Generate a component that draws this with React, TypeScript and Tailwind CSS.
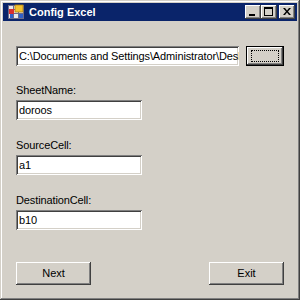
const raised =
  "shadow-[inset_-1px_-1px_#404040,inset_1px_1px_#ffffff,inset_-2px_-2px_#808080,inset_2px_2px_#d4d0c8]";
const sunken =
  "shadow-[inset_1px_1px_#808080,inset_-1px_-1px_#ffffff,inset_2px_2px_#404040,inset_-2px_-2px_#d4d0c8]";

const font = { fontFamily: '"Liberation Sans", Arial, sans-serif' };

type FieldProps = {
  label: string;
  value: string;
  className?: string;
};

const TextBox = ({ value, className }: { value: string; className?: string }) => (
  <div
    className={`flex h-[20px] items-center overflow-hidden whitespace-nowrap bg-white pl-[3px] text-[11px] leading-[13px] tracking-[-0.12px] text-black ${sunken} ${className ?? ""}`}
  >
    {value}
  </div>
);

const Field = ({ label, value, className }: FieldProps) => (
  <div className={`flex flex-col ${className ?? ""}`}>
    <span className="text-[11px] leading-[13px] tracking-[-0.12px] text-black">{label}</span>
    <TextBox value={value} className="mt-[3px] w-[126px]" />
  </div>
);

const CaptionButton = ({ children, className }: { children: React.ReactNode; className?: string }) => (
  <div
    className={`relative flex h-[14px] w-[16px] items-center justify-center bg-[#d4d0c8] ${raised} ${className ?? ""}`}
  >
    {children}
  </div>
);

const AppIcon = () => (
  <svg width="16" height="16" viewBox="0 0 16 16">
    <rect x="0.5" y="1.5" width="15" height="13" fill="#e8e8e8" stroke="#6b6b8a" />
    <line x1="0.5" y1="5.5" x2="15.5" y2="5.5" stroke="#6b6b8a" />
    <line x1="0.5" y1="9.5" x2="15.5" y2="9.5" stroke="#6b6b8a" />
    <line x1="5.5" y1="1.5" x2="5.5" y2="14.5" stroke="#6b6b8a" />
    <line x1="10.5" y1="1.5" x2="10.5" y2="14.5" stroke="#6b6b8a" />
    <rect x="7" y="1" width="8" height="7" fill="#f2c230" stroke="#b08010" strokeWidth="0.8" />
    <rect x="1" y="5" width="5" height="5" fill="#d83030" />
    <rect x="2" y="10" width="3" height="4" fill="#3060c8" />
    <rect x="11" y="10" width="4" height="4" fill="#3060c8" />
  </svg>
);

const PushButton = ({ label, className }: { label: string; className?: string }) => (
  <div
    className={`flex h-[23px] w-[75px] items-center justify-center bg-[#d4d0c8] text-[11px] text-black ${raised} ${className ?? ""}`}
  >
    {label}
  </div>
);

export default function App() {
  return (
    <div
      style={font}
      className="flex h-[300px] w-[300px] flex-col bg-[#d4d0c8] p-[3px] shadow-[inset_-1px_-1px_#404040,inset_1px_1px_#d4d0c8,inset_-2px_-2px_#808080,inset_2px_2px_#ffffff]"
    >
      {/* caption */}
      <div className="flex h-[18px] items-center bg-[#0a246a] pl-[5px] pr-[2px]">
        <AppIcon />
        <span className="ml-[5px] text-[11px] font-bold leading-[13px] text-white">Config Excel</span>
        <div className="ml-auto flex items-center">
          <CaptionButton>
            <span className="absolute left-[4px] top-[9px] h-[2px] w-[6px] bg-black" />
          </CaptionButton>
          <CaptionButton>
            <span className="absolute left-[3px] top-[2px] h-[9px] w-[9px] border border-t-2 border-black" />
          </CaptionButton>
          <CaptionButton className="ml-[2px]">
            <svg width="8" height="7" viewBox="0 0 8 7" className="mt-[-1px]">
              <path d="M0 0h2l2 2.5L6 0h2L5 3.5 8 7H6L4 4.5 2 7H0l3-3.5z" fill="#000" />
            </svg>
          </CaptionButton>
        </div>
      </div>

      {/* client area */}
      <div className="flex flex-1 flex-col pl-[13px] pt-[25px]">
        <div className="flex items-center">
          <TextBox value="C:\Documents and Settings\Administrator\Desktop" className="w-[223px]" />
          <div className="ml-[7px] flex h-[20px] w-[38px] items-center justify-center border border-black bg-[#d4d0c8] shadow-[inset_-1px_-1px_#404040,inset_1px_1px_#ffffff,inset_-2px_-2px_#808080]">
            <div className="h-[12px] w-[28px] border border-dotted border-black" />
          </div>
        </div>

        <Field label="SheetName:" value="doroos" className="mt-[18px]" />
        <Field label="SourceCell:" value="a1" className="mt-[19px]" />
        <Field label="DestinationCell:" value="b10" className="mt-[19px]" />

        <div className="mt-[32px] flex w-[268px] justify-between">
          <PushButton label="Next" />
          <PushButton label="Exit" />
        </div>
      </div>
    </div>
  );
}
